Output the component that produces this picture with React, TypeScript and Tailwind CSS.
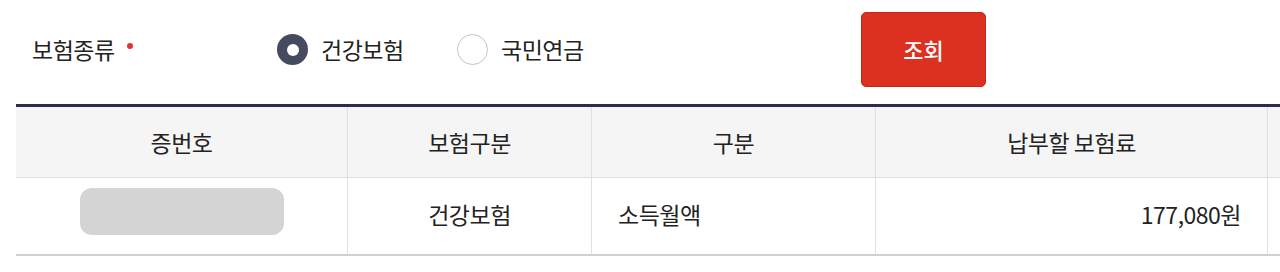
import React from "react";

const font = { fontFamily: '"Noto Sans CJK KR", "Noto Sans", sans-serif' };

function Radio({ label, checked, className = "" }: { label: string; checked?: boolean; className?: string }) {
  return (
    <label className={`flex items-center gap-[13px] cursor-pointer ${className}`}>
      {checked ? (
        <span className="flex h-[31px] w-[31px] shrink-0 items-center justify-center rounded-full bg-[#464a5e]">
          <span className="h-[12px] w-[12px] rounded-full bg-white" />
        </span>
      ) : (
        <span className="h-[31px] w-[31px] shrink-0 rounded-full border-[1.5px] border-[#c4c4c8] bg-white" />
      )}
      <span className="text-[23px] tracking-[-0.5px] text-[#222]">{label}</span>
    </label>
  );
}

export default function App() {
  const cols = ["w-[331px]", "w-[244px]", "w-[284px]", "w-[392px]", "w-[200px]"];

  return (
    <div className="w-[1280px] h-[272px] overflow-hidden bg-white" style={font}>
      <div className="mt-[12px] flex h-[75px] items-center">
        <div className="flex w-[277px] items-center pl-[32px]">
          <span className="text-[23px] tracking-[-0.5px] text-[#222]">보험종류</span>
          <span className="ml-[12px] mb-[8px] h-[6px] w-[6px] rounded-full bg-[#e0352b]" />
        </div>
        <div className="flex w-[584px] items-center">
          <Radio label="건강보험" checked className="w-[180px]" />
          <Radio label="국민연금" />
        </div>
        <button className="h-[75px] w-[125px] rounded-[5px] border border-[#c2291b] bg-[#dc3120] text-[22px] font-medium text-white">
          조회
        </button>
      </div>

      <div className="ml-[16px] mt-[17px] w-[1500px] border-t-[3px] border-[#2c2f45]">
        <div className="flex h-[71px] border-b border-[#e0e0e2] bg-[#f5f5f5] text-[23px] tracking-[-0.5px] text-[#222]">
          {["증번호", "보험구분", "구분", "납부할 보험료", ""].map((h, i) => (
            <div
              key={i}
              className={`${cols[i]} flex items-center justify-center ${i > 0 ? "border-l border-[#e0e0e2]" : ""}`}
            >
              {h}
            </div>
          ))}
        </div>
        <div className="flex h-[78px] border-b-2 border-[#cfd0d4] text-[23px] tracking-[-0.5px] text-[#222]">
          <div className={`${cols[0]} flex items-center justify-center`}>
            <span className="mb-[10px] h-[47px] w-[204px] rounded-[12px] bg-[#d4d4d4]" />
          </div>
          <div className={`${cols[1]} flex items-center justify-center border-l border-[#e0e0e2] pb-[4px]`}>
            건강보험
          </div>
          <div className={`${cols[2]} flex items-center border-l border-[#e0e0e2] pl-[26px] pb-[4px]`}>
            소득월액
          </div>
          <div className={`${cols[3]} flex items-center justify-end border-l border-[#e0e0e2] pr-[26px] pb-[4px]`}>
            177,080원
          </div>
          <div className={`${cols[4]} border-l border-[#e0e0e2]`} />
        </div>
      </div>
    </div>
  );
}
